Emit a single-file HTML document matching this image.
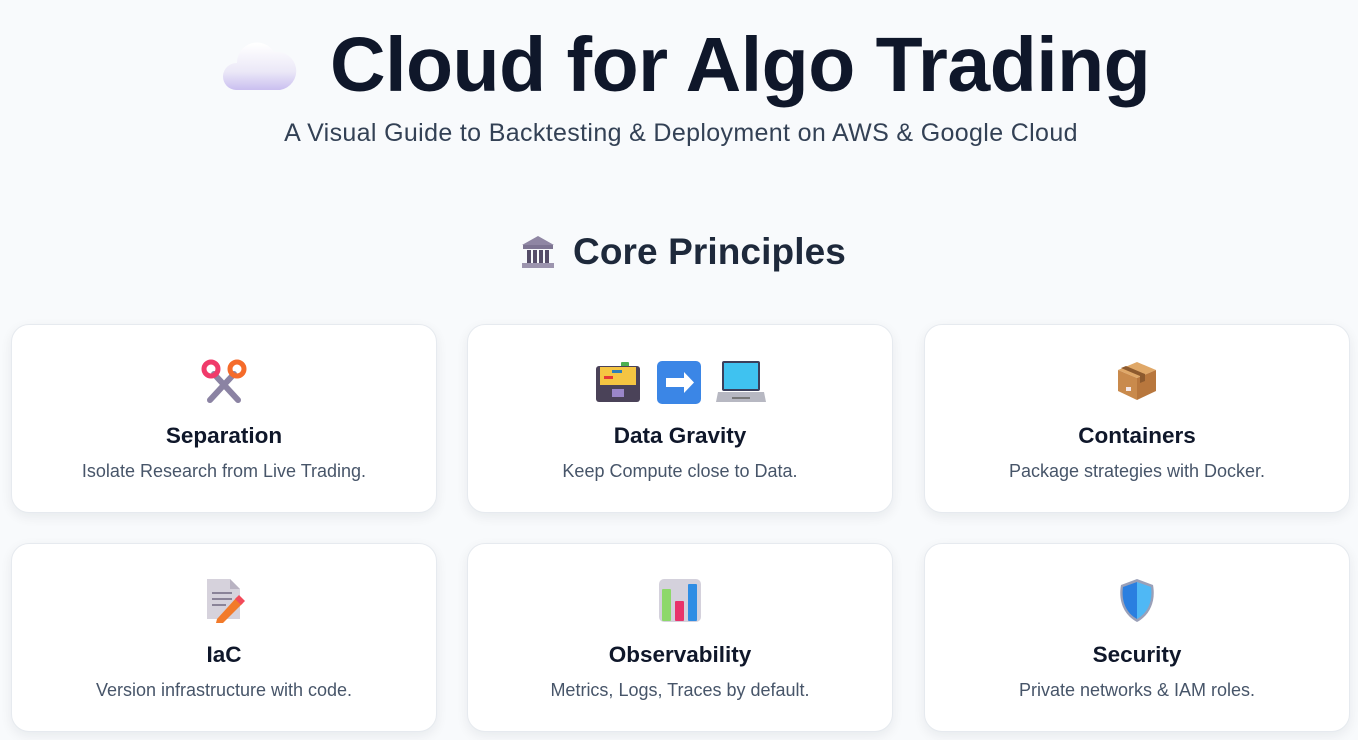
<!DOCTYPE html>
<html><head><meta charset="utf-8"><style>
*{margin:0;padding:0;box-sizing:border-box}
body{width:1358px;height:740px;overflow:hidden;background:#f8fafc;font-family:"Liberation Sans",sans-serif;position:relative;color:#0f172a}
.abs{position:absolute}
h1{position:absolute;left:330px;top:22px;font-size:77px;font-weight:700;line-height:86px;color:#0f172a;white-space:nowrap;letter-spacing:-0.5px}
.sub{position:absolute;width:1358px;text-align:center;left:2px;top:118px;font-size:25px;letter-spacing:0.35px;color:#334155;line-height:30px}
h2{position:absolute;left:573px;top:230px;font-size:37px;font-weight:700;color:#1e293b;line-height:44px;white-space:nowrap;letter-spacing:0.1px}
.card{position:absolute;width:426px;height:189px;background:#fff;border:1px solid #e6eaef;border-radius:18px;box-shadow:0 4px 12px rgba(15,23,42,.07);text-align:center}
.card svg{position:absolute;left:50%;top:33px;transform:translateX(-50%)}
.card .t{position:absolute;left:0;right:0;top:98px;font-size:22.5px;font-weight:700;color:#0f172a;line-height:26px}
.card .d{position:absolute;left:0;right:0;top:135px;font-size:18px;color:#475569;line-height:22px}
</style></head><body>
<svg class="abs" style="left:222px;top:40px" width="76" height="52" viewBox="0 0 76 52">
<defs><linearGradient id="cg" gradientUnits="userSpaceOnUse" x1="0" y1="4" x2="0" y2="50"><stop offset="0" stop-color="#ffffff"/><stop offset="0.6" stop-color="#ebe8f7"/><stop offset="1" stop-color="#cabff0"/></linearGradient></defs>
<path d="M14 50A13 13 0 0 1 15 23A20 20 0 0 1 52 12A19 19 0 0 1 58 50Z" fill="url(#cg)"/>
</svg>
<h1>Cloud for Algo Trading</h1>
<div class="sub">A Visual Guide to Backtesting &amp; Deployment on AWS &amp; Google Cloud</div>
<svg class="abs" style="left:520px;top:234px" width="36" height="36" viewBox="0 0 36 36">
<path d="M18 2L2 11H34Z" fill="#8f86a3"/><rect x="3" y="11" width="30" height="4" fill="#7d7492"/>
<rect x="7" y="16" width="4" height="13" fill="#554d68"/><rect x="13" y="16" width="4" height="13" fill="#554d68"/><rect x="19" y="16" width="4" height="13" fill="#554d68"/><rect x="25" y="16" width="4" height="13" fill="#554d68"/>
<rect x="2" y="29" width="32" height="5" fill="#9c94ae"/></svg>
<h2>Core Principles</h2>

<div class="card" style="left:11px;top:324px">
<svg width="48" height="46" viewBox="0 0 48 46"><path d="M10 42L34 16M38 42L14 16" stroke="#8b83a3" stroke-width="6" stroke-linecap="round"/><circle cx="11" cy="11" r="7" fill="none" stroke="#f03a6a" stroke-width="5"/><circle cx="37" cy="11" r="7" fill="none" stroke="#f56b2a" stroke-width="5"/></svg>
<div class="t">Separation</div><div class="d">Isolate Research from Live Trading.</div></div>

<div class="card" style="left:467px;top:324px">
<svg width="172" height="48" viewBox="0 0 172 48" style="left:50%;top:31px"><rect x="27" y="6" width="8" height="5" rx="1" fill="#4caf50"/><rect x="2" y="10" width="44" height="36" rx="3" fill="#4a4258"/><rect x="6" y="11" width="36" height="18" fill="#f5c542"/><rect x="18" y="14" width="10" height="3" fill="#2e7fb5"/><rect x="10" y="20" width="9" height="3" fill="#e53935"/><rect x="18" y="33" width="12" height="8" fill="#9a86c8"/>
<rect x="63" y="5" width="44" height="43" rx="5" fill="#3b86e6"/><path d="M72 22H90V16L100 26.5L90 37V31H72Z" fill="#fff"/>
<rect x="128" y="5" width="38" height="30" rx="2" fill="#3b3f5c"/><rect x="130" y="7" width="34" height="26" fill="#3fc2f0"/><path d="M124 36H170L172 46H122Z" fill="#b7b8c2"/><rect x="138" y="41" width="18" height="2" fill="#777"/></svg>
<div class="t">Data Gravity</div><div class="d">Keep Compute close to Data.</div></div>

<div class="card" style="left:924px;top:324px">
<svg width="44" height="44" viewBox="0 0 44 44"><path d="M22 4L41 12L22 20L3 12Z" fill="#e0a868"/><path d="M3 12L22 20V42L3 33Z" fill="#c98a4c"/><path d="M41 12L22 20V42L41 33Z" fill="#b8773d"/><path d="M11 8L30 16V23L25 25V18L6 10Z" fill="#8d5a2e"/><rect x="11" y="29" width="5" height="4" fill="#f3e6e6"/></svg>
<div class="t">Containers</div><div class="d">Package strategies with Docker.</div></div>

<div class="card" style="left:11px;top:543px">
<svg width="44" height="46" viewBox="0 0 44 46"><path d="M5 2H28L38 12V42H5Z" fill="#d6d2dc"/><path d="M28 2V12H38Z" fill="#b9b3c2"/><rect x="10" y="15" width="20" height="2" fill="#8a8398"/><rect x="10" y="21" width="20" height="2" fill="#8a8398"/><rect x="10" y="27" width="14" height="2" fill="#8a8398"/><path d="M15 42L35 20L41 26L21 46L14 46Z" fill="#f27a2a"/><path d="M33 22L37 18L43 24L39 28Z" fill="#f24a5a"/></svg>
<div class="t">IaC</div><div class="d">Version infrastructure with code.</div></div>

<div class="card" style="left:467px;top:543px">
<svg width="44" height="46" viewBox="0 0 44 46"><rect x="1" y="2" width="42" height="43" rx="5" fill="#d4d1dc"/><rect x="4" y="12" width="9" height="32" rx="1" fill="#8dd86a"/><rect x="17" y="24" width="9" height="20" rx="1" fill="#e8336a"/><rect x="30" y="7" width="9" height="37" rx="1" fill="#2f8de4"/></svg>
<div class="t">Observability</div><div class="d">Metrics, Logs, Traces by default.</div></div>

<div class="card" style="left:924px;top:543px">
<svg width="40" height="46" viewBox="0 0 40 46"><path d="M20 2L36 8C39 24 33 38 20 45C7 38 1 24 4 8Z" fill="#9aa0b8"/><path d="M20 5V42C9 36 4 24 6 10Z" fill="#2a7fe0"/><path d="M20 5L34 10C36 24 31 36 20 42Z" fill="#4fb8f5"/></svg>
<div class="t">Security</div><div class="d">Private networks &amp; IAM roles.</div></div>
</body></html>
